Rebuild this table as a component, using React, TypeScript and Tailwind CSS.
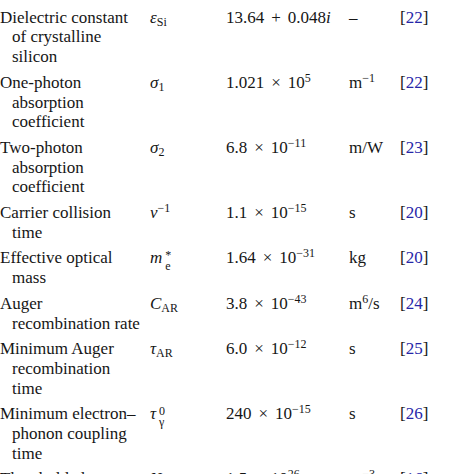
import React from 'react';

// Bits for the math-ish symbols
const I = ({ children }: { children: React.ReactNode }) => <span className="italic">{children}</span>;

const Sub = ({ children }: { children: React.ReactNode }) => (
  <sub className="text-[12px] not-italic">{children}</sub>
);

const Sup = ({ children }: { children: React.ReactNode }) => <sup className="text-[12px] not-italic">{children}</sup>;

// stacked sub + sup (m_e^*, tau_gamma^0)
const SubSup = ({ sub, sup }: { sub: React.ReactNode; sup: React.ReactNode }) => (
  <span className="inline-flex flex-col align-[0.4em] text-[12px] leading-[11px] not-italic ml-[3px]">
    <span>{sup}</span>
    <span>{sub}</span>
  </span>
);

const Times = () => <span className="mx-[7px]">×</span>;

const Sci = ({ m, e }: { m: string; e: string }) => (
  <span>
    {m}
    <Times />
    10<Sup>{e}</Sup>
  </span>
);

interface Row {
  name: string;
  symbol: React.ReactNode;
  value: React.ReactNode;
  unit: React.ReactNode;
  ref: string;
}

const rows: Row[] = [
  {
    name: 'Dielectric constant of crystalline silicon',
    symbol: (
      <span>
        <I>ε</I>
        <Sub>Si</Sub>
      </span>
    ),
    value: (
      <span>
        13.64<span className="mx-[7px]">+</span>0.048<I>i</I>
      </span>
    ),
    unit: '–',
    ref: '22',
  },
  {
    name: 'One-photon absorption coefficient',
    symbol: (
      <span>
        <I>σ</I>
        <Sub>1</Sub>
      </span>
    ),
    value: <Sci m="1.021" e="5" />,
    unit: (
      <span>
        m<Sup>−1</Sup>
      </span>
    ),
    ref: '22',
  },
  {
    name: 'Two-photon absorption coefficient',
    symbol: (
      <span>
        <I>σ</I>
        <Sub>2</Sub>
      </span>
    ),
    value: <Sci m="6.8" e="−11" />,
    unit: 'm/W',
    ref: '23',
  },
  {
    name: 'Carrier collision time',
    symbol: (
      <span>
        <I>ν</I>
        <Sup>−1</Sup>
      </span>
    ),
    value: <Sci m="1.1" e="−15" />,
    unit: 's',
    ref: '20',
  },
  {
    name: 'Effective optical mass',
    symbol: (
      <span>
        <I>m</I>
        <SubSup sub="e" sup="*" />
      </span>
    ),
    value: <Sci m="1.64" e="−31" />,
    unit: 'kg',
    ref: '20',
  },
  {
    name: 'Auger recombination rate',
    symbol: (
      <span>
        <I>C</I>
        <Sub>AR</Sub>
      </span>
    ),
    value: <Sci m="3.8" e="−43" />,
    unit: (
      <span>
        m<Sup>6</Sup>/s
      </span>
    ),
    ref: '24',
  },
  {
    name: 'Minimum Auger recombination time',
    symbol: (
      <span>
        <I>τ</I>
        <Sub>AR</Sub>
      </span>
    ),
    value: <Sci m="6.0" e="−12" />,
    unit: 's',
    ref: '25',
  },
  {
    name: 'Minimum electron– phonon coupling time',
    symbol: (
      <span>
        <I>τ</I>
        <SubSup sub="γ" sup="0" />
      </span>
    ),
    value: <Sci m="240" e="−15" />,
    unit: 's',
    ref: '26',
  },
  {
    name: 'Threshold electron density',
    symbol: (
      <span>
        <I>N</I>
        <Sub>cr</Sub>
      </span>
    ),
    value: <Sci m="1.5" e="26" />,
    unit: (
      <span>
        m<Sup>−3</Sup>
      </span>
    ),
    ref: '16',
  },
];

const cell = 'py-[3px]';

export default function App() {
  return (
    <div
      className="w-[474px] h-[474px] overflow-hidden bg-white text-[#161616] text-[17px] leading-[19.7px]"
      style={{ fontFamily: '"Liberation Serif", "Times New Roman", serif' }}
    >
      <div className="grid grid-cols-[150px_76px_123px_51px_1fr] -mt-[23px]">
        {/* header row, almost all of it above the top edge */}
        <div className="pt-[3px] pb-[5px]" />
        <div className="pt-[3px] pb-[5px] pl-[12px]">Symbol</div>
        <div className="pt-[3px] pb-[5px]" />
        <div className="pt-[3px] pb-[5px]" />
        <div className="pt-[3px] pb-[5px]" />

        {rows.map((r) => (
          <React.Fragment key={r.name}>
            <div className={`${cell} pr-2 pl-3 indent-[-12px]`}>{r.name}</div>
            <div className={cell}>{r.symbol}</div>
            <div className={`${cell} whitespace-nowrap`}>{r.value}</div>
            <div className={`${cell} whitespace-nowrap`}>{r.unit}</div>
            <div className={cell}>
              [<span className="text-[#2626a8]">{r.ref}</span>]
            </div>
          </React.Fragment>
        ))}
      </div>
    </div>
  );
}
